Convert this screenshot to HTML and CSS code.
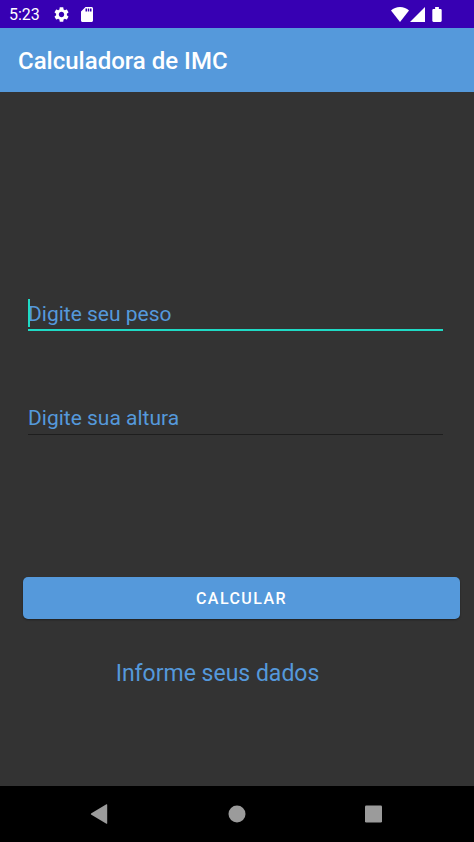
FILE: index.html
```html
<!DOCTYPE html>
<html lang="pt-BR">
<head>
<meta charset="utf-8">
<meta name="viewport" content="width=device-width, initial-scale=1">
<title>Calculadora de IMC</title>
<link rel="stylesheet" href="styles.css">
</head>
<body>
<div class="status">
  <span class="clock">5:23</span>
  <svg class="gear" viewBox="2 2 20 20" aria-hidden="true"><path d="M19.14 12.94c.04-.3.06-.61.06-.94 0-.32-.02-.64-.07-.94l2.03-1.58c.18-.14.23-.41.12-.61l-1.92-3.32c-.12-.22-.37-.29-.59-.22l-2.39.96c-.5-.38-1.03-.7-1.62-.94l-.36-2.54c-.04-.24-.24-.41-.48-.41h-3.84c-.24 0-.43.17-.47.41l-.36 2.54c-.59.24-1.13.57-1.62.94l-2.39-.96c-.22-.08-.47 0-.59.22L2.74 8.87c-.12.21-.08.47.12.61l2.03 1.58c-.05.3-.09.63-.09.94s.02.64.07.94l-2.03 1.58c-.18.14-.23.41-.12.61l1.92 3.32c.12.22.37.29.59.22l2.39-.96c.5.38 1.03.7 1.62.94l.36 2.54c.05.24.24.41.48.41h3.84c.24 0 .44-.17.47-.41l.36-2.54c.59-.24 1.13-.56 1.62-.94l2.39.96c.22.08.47 0 .59-.22l1.92-3.32c.12-.22.07-.47-.12-.61l-2.01-1.58zM12 15.6c-1.98 0-3.6-1.62-3.6-3.6s1.62-3.6 3.6-3.6 3.6 1.62 3.6 3.6-1.62 3.6-3.6 3.6z"/></svg>
  <svg class="card" viewBox="4 2 16 20" aria-hidden="true"><path d="M18 2h-8L4.02 8 4 20c0 1.100.9 2 2 2h12c1.100 0 2-.9 2-2V4c0-1.100-.9-2-2-2zm-6 6h-2V4h2v4zm3 0h-2V4h2v4zm3 0h-2V4h2v4z"/></svg>
  <span class="signals">
    <svg class="wifi" viewBox="0 0 18 15" aria-hidden="true"><path d="M9 15 0 3.600C2.300 1.400 5.500 0 9 0s6.700 1.400 9 3.600z"/></svg>
    <svg class="cell" viewBox="0 0 15 15" aria-hidden="true"><path d="M0 15h15V0z"/></svg>
    <svg class="battery" viewBox="0 0 10 16" aria-hidden="true"><path d="M8.700 2H7V0H3v2H1.300C.6 2 0 2.600 0 3.300v11.400C0 15.400.6 16 1.300 16h7.400c.7 0 1.300-.6 1.300-1.300V3.300C10 2.600 9.400 2 8.700 2z"/></svg>
  </span>
</div>
<header class="appbar"><h1>Calculadora de IMC</h1></header>
<main>
  <form class="form">
    <div class="field focused">
      <input type="text" inputmode="decimal" aria-label="Digite seu peso" placeholder="Digite seu peso">
    </div>
    <div class="field">
      <input type="text" inputmode="decimal" aria-label="Digite sua altura" placeholder="Digite sua altura">
    </div>
    <button class="calc" type="button">CALCULAR</button>
  </form>
  <p class="result">Informe seus dados</p>
</main>
<nav class="nav">
  <button type="button" aria-label="Voltar"><svg viewBox="0 0 20 20" aria-hidden="true"><path d="M17.200.7v18.600q0 .8-.8.400L1.400 10.800q-1.100-.8 0-1.600L16.400.3q.8-.4.8.4z"/></svg></button>
  <button type="button" aria-label="Início"><svg viewBox="0 0 20 20" aria-hidden="true"><circle cx="10" cy="10" r="8.500"/></svg></button>
  <button type="button" aria-label="Recentes"><svg viewBox="0 0 20 20" aria-hidden="true"><rect x="1" y="1.500" width="17" height="17" rx="1.300"/></svg></button>
</nav>
</body>
</html>
```
FILE: styles.css
```css
* { box-sizing: border-box; }

body {
  margin: 0;
  min-height: 100vh;
  display: flex;
  flex-direction: column;
  background: #333333;
  color: #5599db;
  font-family: Roboto, "Liberation Sans", sans-serif;
}

.status {
  display: flex;
  align-items: center;
  height: 28px;
  padding: 0 32px 0 9px;
  background: #3700b3;
  color: #fff;
}
.status svg { display: block; fill: currentColor; }
.clock { font-size: 16px; line-height: 28px; padding-top: 1px; }
.gear { width: 15px; height: 15px; margin-left: 14px; }
.card { width: 12px; height: 15px; margin-left: 12px; }
.signals { display: flex; align-items: center; margin-left: auto; }
.wifi { width: 18px; height: 15px; }
.cell { width: 15px; height: 15px; margin-left: 1px; }
.battery { width: 10px; height: 15px; margin-left: 7px; }

.appbar {
  display: flex;
  align-items: center;
  height: 64px;
  padding: 2px 18px 0;
  background: #5599db;
  color: #fff;
}
.appbar h1 { margin: 0; font-size: 24px; line-height: 28px; font-weight: 500; }

main {
  flex: 1;
  padding: 207px 14px 0 23px;
}
.form { display: flex; flex-direction: column; }
.field {
  position: relative;
  height: 32px;
  margin: 0 17px 72px 5px;
  border-bottom: 1px solid #1e1e1e;
}
.field.focused { border-bottom: 2px solid #1fdac5; }
.field.focused::before {
  content: "";
  position: absolute;
  left: 0;
  top: 0;
  width: 2px;
  height: 28px;
  background: #1fdac5;
}
.field input {
  display: block;
  width: 100%;
  height: 30px;
  padding: 0;
  border: 0;
  outline: 0;
  background: transparent;
  color: #5599db;
  font: 400 21px/30px Roboto, "Liberation Sans", sans-serif;
}
.field input::placeholder { color: #5599db; opacity: 1; }

.calc {
  height: 42px;
  margin-top: 70px;
  padding: 2px 0 0;
  border: 0;
  border-radius: 5px;
  background: #5599db;
  box-shadow: 0 1px 2px rgba(0, 0, 0, 0.4);
  color: #fff;
  font: 500 16px/40px Roboto, "Liberation Sans", sans-serif;
  letter-spacing: 0.09em;
}
.result {
  margin: 41px 48px 0 0;
  text-align: center;
  font-size: 23px;
  line-height: 28px;
}

.nav {
  display: flex;
  justify-content: center;
  align-items: center;
  gap: 97px;
  height: 56px;
  background: #000;
}
.nav button {
  width: 40px;
  height: 40px;
  padding: 10px;
  border: 0;
  background: none;
}
.nav svg { display: block; width: 20px; height: 20px; fill: #9b9b9b; }
```
